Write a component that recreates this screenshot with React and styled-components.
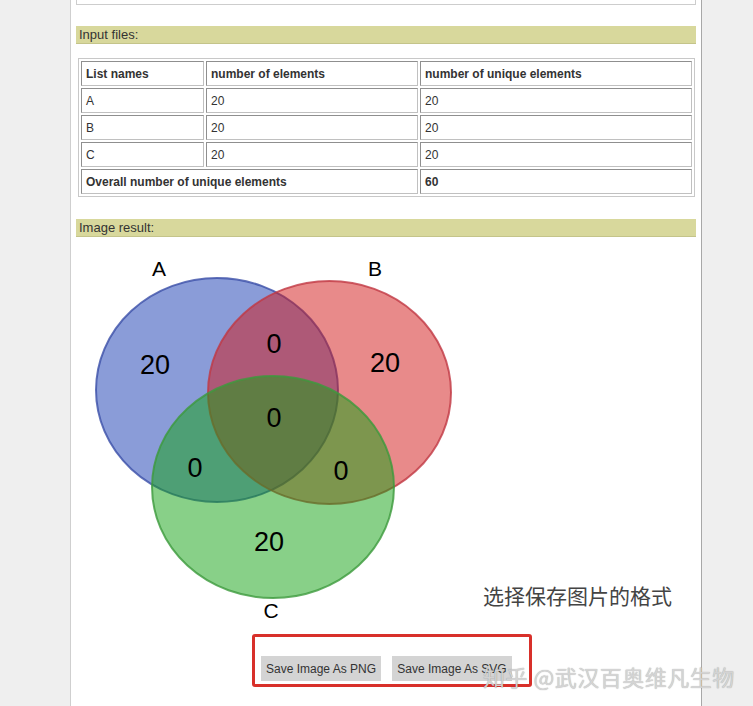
import React from "react";
import styled, { createGlobalStyle } from "styled-components";

const GlobalStyle = createGlobalStyle`
  html, body {
    margin: 0;
    padding: 0;
    height: 100%;
    background: #efefef;
    font-family: "Liberation Sans", Arial, sans-serif;
  }
  #root {
    height: 100%;
  }
`;

const rows = [
  { name: "A", total: 20, unique: 20 },
  { name: "B", total: 20, unique: 20 },
  { name: "C", total: 20, unique: 20 },
];

const circles = [
  { cx: 141, cy: 150, rx: 121, ry: 112, fill: "#1539b1", stroke: "#3b4fa8" },
  { cx: 253.5, cy: 152.5, rx: 121.5, ry: 111.5, fill: "#d11515", stroke: "#c03844" },
  { cx: 197, cy: 247, rx: 121, ry: 111, fill: "#11a111", stroke: "#3c9a3c" },
];

const counts = [
  { x: 79, y: 134, v: "20" },
  { x: 198, y: 113, v: "0" },
  { x: 309, y: 132, v: "20" },
  { x: 198, y: 187, v: "0" },
  { x: 119, y: 237, v: "0" },
  { x: 265, y: 240, v: "0" },
  { x: 193, y: 311, v: "20" },
];

const App = () => {
  return (
    <>
      <GlobalStyle />
      <Page>
        <Panel>
          <PrevBox />
          <SectionBar>Input files:</SectionBar>
          <TableWrap>
            <FileTable>
              <colgroup>
                <col style={{ width: 123 }} />
                <col style={{ width: 212 }} />
                <col />
              </colgroup>
              <tbody>
                <tr>
                  <HeadCell>List names</HeadCell>
                  <HeadCell>number of elements</HeadCell>
                  <HeadCell>number of unique elements</HeadCell>
                </tr>
                {rows.map((r) => (
                  <tr key={r.name}>
                    <Cell>{r.name}</Cell>
                    <Cell>{r.total}</Cell>
                    <Cell>{r.unique}</Cell>
                  </tr>
                ))}
                <tr>
                  <HeadCell colSpan={2}>Overall number of unique elements</HeadCell>
                  <HeadCell>60</HeadCell>
                </tr>
              </tbody>
            </FileTable>
          </TableWrap>
          <SectionBar $top={22}>Image result:</SectionBar>
          <ResultArea>
            <Venn width="620" height="385" viewBox="0 0 620 385">
              {circles.map((c, i) => (
                <ellipse
                  key={i}
                  cx={c.cx}
                  cy={c.cy}
                  rx={c.rx}
                  ry={c.ry}
                  fill={c.fill}
                  fillOpacity="0.5"
                  stroke={c.stroke}
                  strokeOpacity="0.8"
                  strokeWidth="2"
                />
              ))}
              <g fontFamily="Liberation Sans, Arial, sans-serif" fill="#000" textAnchor="middle">
                <text x="83" y="36" fontSize="21">A</text>
                <text x="299" y="36" fontSize="21">B</text>
                <text x="195" y="378" fontSize="21">C</text>
                {counts.map((n, i) => (
                  <text key={i} x={n.x} y={n.y} fontSize="27">
                    {n.v}
                  </text>
                ))}
              </g>
            </Venn>
            <Annotation>选择保存图片的格式</Annotation>
            <SaveBox>
              <SaveButton>Save Image As PNG</SaveButton>
              <SaveButton>Save Image As SVG</SaveButton>
            </SaveBox>
          </ResultArea>
        </Panel>
        <Watermark>知乎 @武汉百奥维凡生物</Watermark>
      </Page>
    </>
  );
};

export default App;

const Page = styled.div`
  position: relative;
  height: 100%;
  overflow: hidden;
`;

const Panel = styled.div`
  margin-left: 70px;
  width: 632px;
  height: 100%;
  box-sizing: border-box;
  background: #fff;
  border-left: 1px solid #cfcfcf;
  border-right: 1px solid #a8a8a8;
  padding: 0 5px;
`;

const PrevBox = styled.div`
  height: 4px;
  border: 1px solid #cdcdcd;
  border-top: none;
`;

const SectionBar = styled.div`
  margin-top: ${(p) => p.$top ?? 21}px;
  height: 17px;
  line-height: 17px;
  background: #d8d89c;
  border-bottom: 1px solid #c4c48a;
  padding-left: 3px;
  font-size: 13px;
  color: #333;
`;

const TableWrap = styled.div`
  margin: 14px 2px 0 2px;
`;

const FileTable = styled.table`
  width: 617px;
  table-layout: fixed;
  border: 1px solid #c8c8c8;
  border-spacing: 2px;
  padding: 0;
  font-size: 12px;
  color: #333;
`;

const Cell = styled.td`
  box-sizing: border-box;
  height: 25px;
  padding: 0 4px;
  border: 1px solid #8f8f8f;
  border-right-color: #c0c0c0;
  border-bottom-color: #c0c0c0;
  font-weight: normal;
`;

const HeadCell = styled(Cell)`
  font-weight: bold;
`;

const ResultArea = styled.div`
  position: relative;
  margin-top: 3px;
`;

const Venn = styled.svg`
  display: block;
`;

const Annotation = styled.div`
  position: absolute;
  left: 407px;
  top: 340px;
  font-family: "Noto Sans CJK SC", "Liberation Sans", sans-serif;
  font-size: 21px;
  color: #444;
  white-space: nowrap;
`;

const SaveBox = styled.div`
  display: inline-flex;
  gap: 11px;
  margin: 9px 0 0 176px;
  padding: 19px 17px 3px 6px;
  border: 3px solid #d8302a;
  border-radius: 3px;
`;

const SaveButton = styled.button`
  width: 120px;
  height: 25px;
  padding: 0;
  border: none;
  background: #d4d4d4;
  font-family: "Liberation Sans", Arial, sans-serif;
  font-size: 12px;
  color: #333;
`;

const Watermark = styled.div`
  position: absolute;
  left: 483px;
  top: 660px;
  font-family: "Noto Sans CJK SC", sans-serif;
  font-size: 22px;
  letter-spacing: 0.5px;
  color: rgba(215, 215, 215, 0.95);
  text-shadow: 0 0 1px rgba(0, 0, 0, 0.35);
  white-space: nowrap;
  pointer-events: none;
`;
